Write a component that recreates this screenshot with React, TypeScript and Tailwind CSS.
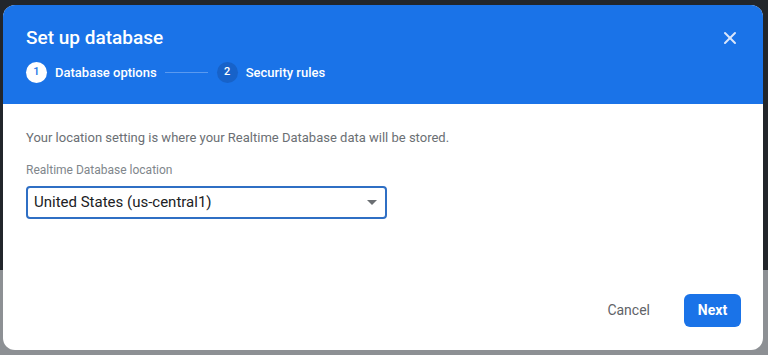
import { X } from 'lucide-react'

export default function App() {
  return (
    <div className="w-[768px] h-[355px] overflow-hidden bg-[linear-gradient(to_bottom,#22262b_0,#22262b_270px,#8d9094_270px,#8d9094_100%)] pl-[3px] pt-[5px] font-['Roboto','Liberation_Sans',sans-serif]">
      <div className="w-[760px] h-[345px] rounded-[12px] bg-white overflow-hidden flex flex-col">
        {/* header */}
        <div className="h-[99px] bg-[#1a73e8] px-[23px] pt-[21px] flex flex-col relative">
          <h1 className="text-white text-[19px] leading-[24px] font-medium">Set up database</h1>
          <div className="mt-[12px] flex items-center">
            <span className="w-[21px] h-[21px] rounded-full bg-white text-[#1a73e8] text-[11px] font-medium flex items-center justify-center">1</span>
            <span className="ml-[8px] text-white text-[13px] font-medium">Database options</span>
            <span className="ml-[8px] w-[43px] h-px bg-[#5a9af0]" />
            <span className="ml-[9px] w-[21px] h-[21px] rounded-full bg-[#1762c9] text-white text-[11px] font-medium flex items-center justify-center">2</span>
            <span className="ml-[8px] text-white text-[13px] font-medium">Security rules</span>
          </div>
          <button className="absolute right-[23px] top-[23px] text-[#dbe7fb]">
            <X size={20} strokeWidth={2.4} />
          </button>
        </div>

        {/* body */}
        <div className="flex-1 px-[23px] pt-[25px]">
          <p className="text-[#6b6f74] text-[13px] leading-[18px]">
            Your location setting is where your Realtime Database data will be stored.
          </p>
          <p className="mt-[16px] text-[#80868b] text-[12px] leading-[14px]">Realtime Database location</p>
          <div className="mt-[9px] w-[361px] h-[33px] rounded-[4px] border-2 border-[#2f6fc4] flex items-center pl-[6px] pr-[8px]">
            <span className="flex-1 text-[#202124] text-[15px]">United States (us-central1)</span>
            <svg width="10" height="5" viewBox="0 0 10 5">
              <path d="M0 0 L10 0 L5 5 Z" fill="#6b6f73" />
            </svg>
          </div>
        </div>

        {/* footer */}
        <div className="flex items-center justify-end gap-[34px] pr-[22px] pb-[23px]">
          <button className="text-[#5f6368] text-[14px]">Cancel</button>
          <button className="w-[57px] h-[33px] rounded-[6px] bg-[#1a73e8] text-white text-[14px] font-bold">Next</button>
        </div>
      </div>
    </div>
  )
}
